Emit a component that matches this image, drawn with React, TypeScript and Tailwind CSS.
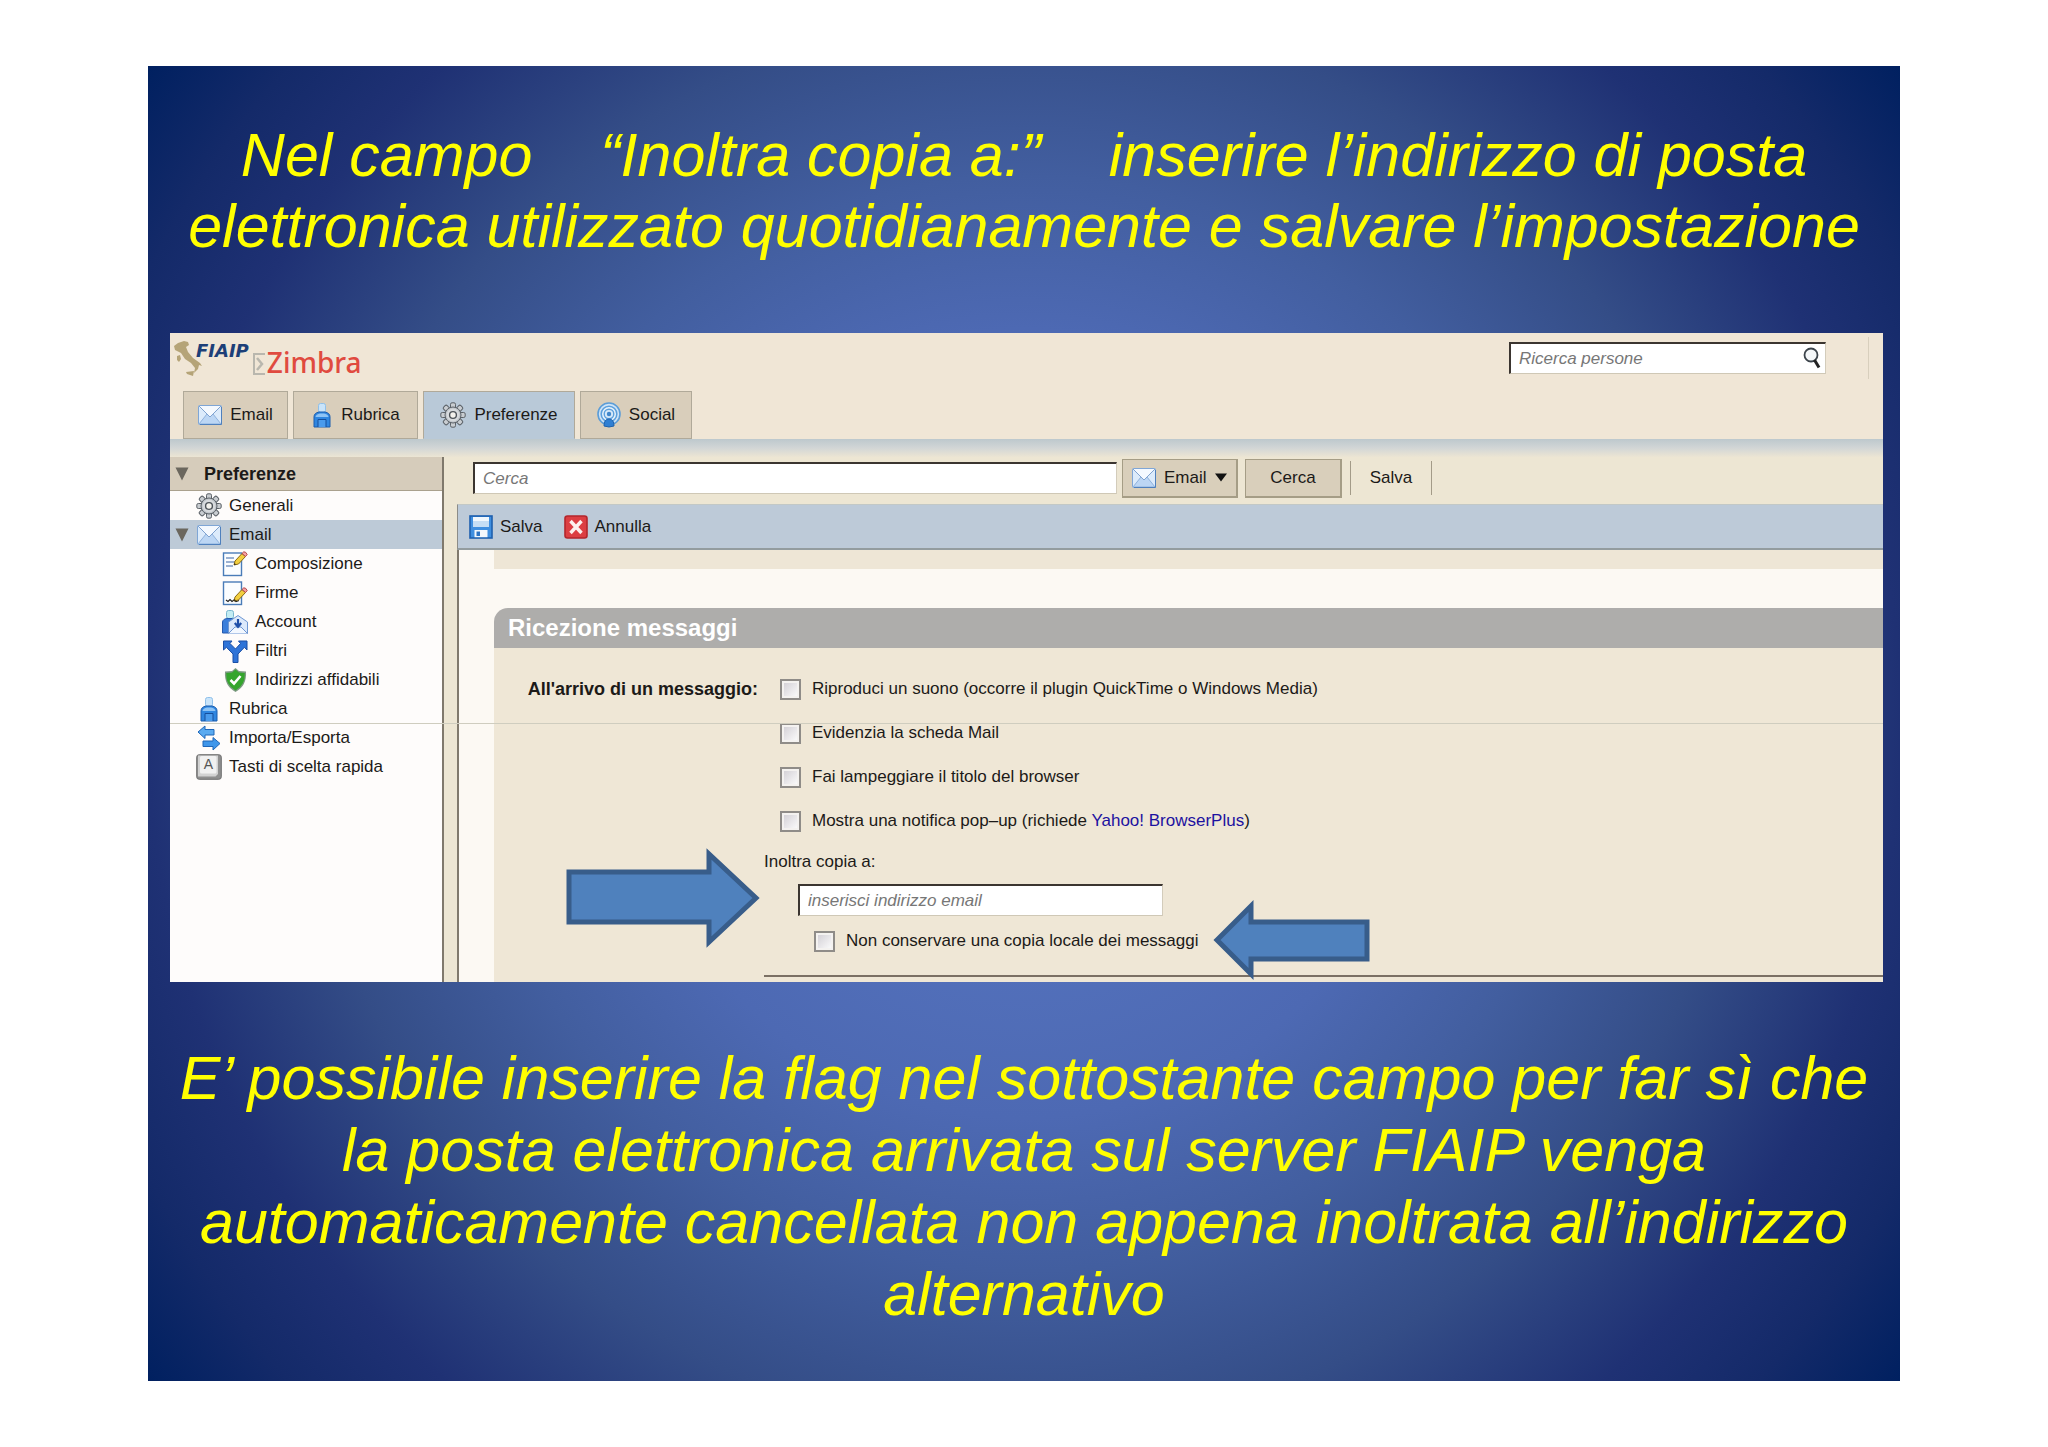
import React from 'react';

interface IconProps {
  className?: string;
}

const EnvelopeIcon: React.FC<IconProps> = ({ className = '' }) => (
  <svg className={className} width="24" height="20" viewBox="0 0 24 20">
    <rect x="0.5" y="0.5" width="23" height="19" rx="1" fill="#dcebfb" stroke="#7fa6d6" />
    <path d="M1 19 L9 9 L12 12 L15 9 L23 19 Z" fill="#bcd6f4" stroke="#8fb2dd" />
    <path d="M1 1 L12 12 L23 1" fill="#f4f9ff" stroke="#7fa2cf" />
    <path d="M23.5 2 V19.5 H2" fill="none" stroke="#4f80bd" />
  </svg>
);

const PersonIcon: React.FC<IconProps> = ({ className = '' }) => (
  <svg className={className} width="22" height="26" viewBox="0 0 22 26">
    <rect x="7.5" y="1.5" width="7" height="9" rx="2" fill="#c9e4fa" stroke="#8fc0ea" />
    <path d="M3 25 V15 Q3 11 8 10 H14 Q19 11 19 15 V25 Z" fill="#2f86e0" stroke="#1a5cae" />
    <path d="M4.5 15 Q5 12 9 11.5 H13 Q17 12 17.5 15 Z" fill="#8fc4f5" />
    <path d="M7 25 V17.5 H15 V25" fill="#4a9bec" stroke="#164f9c" />
  </svg>
);

const GearIcon: React.FC<IconProps> = ({ className = '' }) => (
  <svg className={className} width="26" height="26" viewBox="0 0 26 26">
    <g fill="#c9cdd1" stroke="#5c6268">
      {[0, 45, 90, 135, 180, 225, 270, 315].map((angle) => (
        <rect key={angle} x="10.5" y="0.8" width="5" height="7" rx="1.5" transform={`rotate(${angle} 13 13)`} />
      ))}
    </g>
    <circle cx="13" cy="13" r="8" fill="#bfc4c9" stroke="#5c6268" />
    <circle cx="13" cy="13" r="6.4" fill="#d7dadd" />
    <circle cx="13" cy="13" r="3.4" fill="#f3f1ec" stroke="#4d5359" strokeWidth="1.4" />
  </svg>
);

const SocialIcon: React.FC = () => (
  <svg width="24" height="26" viewBox="0 0 24 26">
    <circle cx="12" cy="12" r="11" fill="#cfe4f7" stroke="#5b9dd8" strokeWidth="1.6" />
    <circle cx="12" cy="12" r="7.8" fill="#e8f3fc" stroke="#5b9fdc" strokeWidth="1.6" />
    <circle cx="12" cy="12" r="4.8" fill="#d5e8f8" stroke="#5b9fdc" strokeWidth="1.4" />
    <circle cx="12" cy="12" r="2.2" fill="#3f86cc" />
    <path d="M7 24 Q7 17 12 17 Q17 17 17 24 Q12 26 7 24 Z" fill="#2f7fd3" stroke="#1f62ab" />
  </svg>
);

const PencilPageIcon: React.FC<{ signature?: boolean }> = ({ signature }) => (
  <svg width="26" height="26" viewBox="0 0 26 26">
    <rect x="1.5" y="2" width="18" height="22.5" fill="#fbfdff" stroke="#4a7cb8" strokeWidth="1.4" />
    {signature ? (
      <path d="M4 20 l2 1.5 l2 -2 l2 2 l2 -1.5 l2 1.5 l3 -1" fill="none" stroke="#222" strokeWidth="1.2" />
    ) : (
      <path d="M4 7 H12 M4 11 H13 M4 15 H11" stroke="#7c98c4" strokeWidth="1.5" />
    )}
    <g transform={signature ? 'translate(0 7)' : undefined}>
      <path d="M12 14 L13 10 L20 2.5 L23.5 5.5 L16.5 13 Z" fill="#f2cf3f" stroke="#8a6a15" />
      <path d="M20 2.5 L21.8 0.8 Q24 0.6 25.2 3.6 L23.5 5.5 Z" fill="#f5a3a3" stroke="#b5474b" />
      <path d="M12 14 L12.6 12 L14 13.4 Z" fill="#222" />
    </g>
  </svg>
);

const AccountIcon: React.FC = () => (
  <svg width="26" height="26" viewBox="0 0 26 26">
    <rect x="4.5" y="1.5" width="7" height="8" rx="2" fill="#c3ecf3" stroke="#78b6cf" />
    <path d="M0.5 24 V13 Q1 9.5 6 9.5 H10 L13 12 V24 Z" fill="#3b7fdb" stroke="#2459ae" />
    <path d="M6.5 13 L16 6.5 L25.5 13 V24.5 H6.5 Z" fill="#dce9fb" stroke="#6f97d2" />
    <path d="M6.5 24.5 L13 18 H19 L25.5 24.5" fill="#f3f8ff" stroke="#6f97d2" />
    <path d="M16 10 V16 M12.8 14 L16 17.8 L19.2 14" fill="none" stroke="#1f4fa8" strokeWidth="2.2" />
  </svg>
);

const FilterIcon: React.FC = () => (
  <svg width="26" height="26" viewBox="0 0 26 26">
    <path
      d="M1.5 3 H10 L8 5.5 L13.5 11 L18.5 5.5 L16.5 3 H25 V12 L22.4 9.3 L16 16 V24.5 H11 V16 L4.4 9.3 L1.5 12 Z"
      fill="#2f74d8"
      stroke="#1b4fa6"
    />
  </svg>
);

const ShieldIcon: React.FC = () => (
  <svg width="26" height="26" viewBox="0 0 26 26">
    <path d="M13.5 1 L17 4 L24 4.5 Q25 19 13.5 25 Q2 19 3 4.5 L10 4 Z" fill="#7f9a84" />
    <path d="M13.5 2.5 L17 5.5 L22.8 6 Q23.5 18 13.5 23.5 Q3.5 18 4.2 6 L10 5.5 Z" fill="#35a52d" />
    <path d="M8.5 13 L12 16.5 L18.5 9" fill="none" stroke="#fff" strokeWidth="2.6" />
  </svg>
);

const ImportExportIcon: React.FC = () => (
  <svg width="26" height="26" viewBox="0 0 26 26">
    <path d="M2 7 L9 1 V4.5 H18 V10 H9 V13.5 Z" fill="#5aaaf0" stroke="#1f66b8" />
    <path d="M24 18.5 L17 12.5 V16 H7 V21.5 H17 V25 Z" fill="#3f96ea" stroke="#1f66b8" />
  </svg>
);

const KeyIcon: React.FC = () => (
  <svg width="26" height="26" viewBox="0 0 26 26">
    <rect x="0.7" y="0.7" width="24.6" height="24.6" rx="2.5" fill="#8f8f8f" stroke="#6f6f6f" />
    <path d="M2 1.5 H22 V20 L19.5 22.5 H2 Z" fill="#d2d2d2" />
    <rect x="4" y="2" width="16.5" height="17.5" rx="1.5" fill="#f1f1f1" />
    <text x="12.3" y="14.5" textAnchor="middle" fontSize="14" fontFamily="Liberation Sans, sans-serif" fill="#555">
      A
    </text>
  </svg>
);

const DiskIcon: React.FC = () => (
  <svg width="24" height="24" viewBox="0 0 24 24">
    <rect x="1" y="1" width="22" height="22" fill="#3f8fe0" stroke="#1f5fae" strokeWidth="1.6" />
    <rect x="4" y="2" width="16" height="10" fill="#f1f8fe" />
    <rect x="4" y="6" width="16" height="6" fill="#c5def5" />
    <rect x="5.5" y="15" width="13" height="7.2" fill="#f4f8fc" />
    <rect x="7.5" y="16.5" width="3.5" height="4.5" fill="#2d74c4" />
  </svg>
);

const CancelIcon: React.FC = () => (
  <svg width="24" height="24" viewBox="0 0 24 24">
    <rect x="1" y="1" width="22" height="22" rx="2.5" fill="#dc3e42" stroke="#b3262c" strokeWidth="1.6" />
    <path d="M6.5 6 L17.5 18 M17.5 6 L6.5 18" stroke="#fdf1ee" strokeWidth="3.4" />
  </svg>
);

const Triangle: React.FC<IconProps> = ({ className = '' }) => (
  <svg className={className} width="14" height="14" viewBox="0 0 14 14">
    <path d="M0.5 0.5 H13.5 L7 13.5 Z" fill="#6b675e" />
  </svg>
);

const Logo: React.FC = () => (
  <div className="flex items-start pt-2 pl-1">
    <svg className="-mr-3" width="34" height="36" viewBox="0 0 34 36">
      <path
        d="M0 5 L4 2 L10 0 L14 1 L15 4 L12 6 L14 11 L19 17 L26 22 L28 25 L25 24 L24 28 L20 32 L21 27 L17 22 L11 18 L7 12 L3 10 L1 9 Z"
        fill="#b5a478"
      />
      <path d="M3 15 L6 14 L7 18 L5 21 L3 19 Z M12 31 L20 30 L19 35 L13 33 Z" fill="#b5a478" />
    </svg>
    <span className="font-['DejaVu_Sans',sans-serif] text-[18px] leading-[20px] font-bold italic text-[#1d3f78]">
      FIAIP
    </span>
    <svg className="ml-1 mt-3" width="14" height="22" viewBox="0 0 14 22">
      <path d="M12 1 H1 V21 H12" fill="none" stroke="#b9b7ae" strokeWidth="2" />
      <path d="M4 5 L9 11 L4 17" fill="none" stroke="#b9b7ae" strokeWidth="2.5" />
    </svg>
    <span className="mt-1 font-['Noto_Sans',sans-serif] text-[28px] leading-[34px] font-medium text-[#e04a3f]">
      Zimbra
    </span>
  </div>
);

const tabs = [
  { label: 'Email', icon: <EnvelopeIcon />, style: 'w-[105px] bg-[#d9cebb]' },
  { label: 'Rubrica', icon: <PersonIcon />, style: 'w-[125px] bg-[#d9cebb]' },
  { label: 'Preferenze', icon: <GearIcon />, style: 'w-[152px] bg-[#b9c9d8] border-b-[#b9c9d8]' },
  { label: 'Social', icon: <SocialIcon />, style: 'w-[112px] bg-[#d9cebb]' },
];

const folders = [
  { label: 'Generali', icon: <GearIcon /> },
  { label: 'Email', icon: <EnvelopeIcon />, selected: true },
  { label: 'Composizione', icon: <PencilPageIcon />, nested: true },
  { label: 'Firme', icon: <PencilPageIcon signature />, nested: true },
  { label: 'Account', icon: <AccountIcon />, nested: true },
  { label: 'Filtri', icon: <FilterIcon />, nested: true },
  { label: 'Indirizzi affidabili', icon: <ShieldIcon />, nested: true },
  { label: 'Rubrica', icon: <PersonIcon /> },
  { label: 'Importa/Esporta', icon: <ImportExportIcon /> },
  { label: 'Tasti di scelta rapida', icon: <KeyIcon /> },
];

const fieldClass =
  'border-t-2 border-l-2 border-r border-b border-t-[#3b3530] border-l-[#3b3530] border-r-[#d3ccbb] border-b-[#cfc8b6] bg-white px-2 italic outline-none placeholder:text-[#777]';

const Header: React.FC = () => (
  <header className="bg-[#f0e6d6]">
    <div className="flex h-[58px] items-start justify-between">
      <Logo />
      <div className="flex items-start pr-[14px]">
        <div className="relative mt-[9px] mr-[42px]">
          <input
            type="search"
            aria-label="Ricerca persone"
            placeholder="Ricerca persone"
            className={`${fieldClass} block h-[32px] w-[317px]`}
          />
          <svg className="absolute top-1 right-1" width="20" height="24" viewBox="0 0 20 24">
            <circle cx="9" cy="9" r="6.5" fill="#f4f7f9" stroke="#3c444b" strokeWidth="1.8" />
            <path d="M12.5 14 L17 21.5" stroke="#222" strokeWidth="3" />
          </svg>
        </div>
        <div className="mt-1 h-[42px] w-px bg-[#d8cfbd]" />
      </div>
    </div>
    <nav className="flex gap-[5px] pl-[13px]">
      {tabs.map((tab) => (
        <button
          key={tab.label}
          type="button"
          className={`flex h-[48px] items-center justify-center gap-2 border border-[#b0a999] ${tab.style}`}
        >
          {tab.icon}
          {tab.label}
        </button>
      ))}
    </nav>
    <div className="h-[18px] bg-linear-to-b from-[#bdc8cd] via-[#d2d6d6] to-[#ece5d3]" />
  </header>
);

const Sidebar: React.FC = () => (
  <aside className="w-[274px] shrink-0 border-r-2 border-[#80796c] bg-[#fefcfb]">
    <h2 className="flex h-[34px] items-center border-b border-[#aaa18e] bg-[#d6ccbb] pl-[5px] text-[18px] font-bold">
      <Triangle className="mr-[15px]" />
      Preferenze
    </h2>
    {folders.map((folder) => (
      <button
        key={folder.label}
        type="button"
        className={`flex h-[29px] w-full items-center ${folder.nested ? 'pl-[52px]' : folder.selected ? 'bg-[#bdcad7] pl-[5px]' : 'pl-[26px]'}`}
      >
        {folder.selected && <Triangle className="mr-[7px]" />}
        <span className="mr-[7px] flex w-[26px] justify-center">{folder.icon}</span>
        {folder.label}
      </button>
    ))}
  </aside>
);

const SearchBar: React.FC = () => (
  <div className="flex h-[47px] items-center pb-[5px] pl-[16px]">
    <input
      type="search"
      aria-label="Cerca"
      placeholder="Cerca"
      className={`${fieldClass} h-[32px] w-[644px]`}
    />
    <label className="ml-[5px] flex h-[39px] w-[116px] items-center border border-r-2 border-b-2 border-[#a59d86] bg-[#d9cfbb] pl-[9px]">
      <EnvelopeIcon />
      <select aria-label="Tipo di ricerca" className="ml-2 w-[44px] appearance-none bg-transparent outline-none">
        <option>Email</option>
      </select>
      <svg className="ml-[6px]" width="14" height="9" viewBox="0 0 14 9">
        <path d="M1 0.5 H13 L7 8.5 Z" fill="#111" />
      </svg>
    </label>
    <button
      type="button"
      className="ml-[7px] h-[39px] w-[97px] border border-r-2 border-b-2 border-[#a59d86] bg-[#d9cfbb]"
    >
      Cerca
    </button>
    <button type="button" className="ml-[8px] h-[34px] w-[82px] border-x border-[#a39b88]">
      Salva
    </button>
  </div>
);

interface CheckOptionProps {
  id: string;
  className?: string;
  children: React.ReactNode;
}

const CheckOption: React.FC<CheckOptionProps> = ({ id, className = 'h-[44px]', children }) => (
  <div className={`flex items-center gap-[11px] ${className}`}>
    <input
      id={id}
      type="checkbox"
      className="size-[21px] shrink-0 appearance-none border-2 border-[#8f8c88] bg-linear-to-br from-[#cfccd2] to-[#ffffff] ring-2 ring-[#f4f2f0] ring-inset"
    />
    <label htmlFor={id}>{children}</label>
  </div>
);

const ReceivingForm: React.FC = () => (
  <form className="relative flex bg-[#efe7d6] pt-[19px] pb-[5px]">
    <div className="h-[44px] w-[270px] shrink-0 pr-[6px] text-right text-[18px] leading-[44px] font-bold">
      All'arrivo di un messaggio:
    </div>
    <div className="flex-1">
      <div className="pl-[16px]">
        <CheckOption id="sound">Riproduci un suono (occorre il plugin QuickTime o Windows Media)</CheckOption>
        <CheckOption id="highlight">Evidenzia la scheda Mail</CheckOption>
        <CheckOption id="blink">Fai lampeggiare il titolo del browser</CheckOption>
        <CheckOption id="popup">
          Mostra una notifica pop–up (richiede <a href="#" className="text-[#1d12a0]">Yahoo! BrowserPlus</a>)
        </CheckOption>
      </div>
      <label htmlFor="forward" className="block h-[41px] leading-[38px]">Inoltra copia a:</label>
      <input
        id="forward"
        type="email"
        placeholder="inserisci indirizzo email"
        className={`${fieldClass} ml-[34px] block h-[32px] w-[365px]`}
      />
      <CheckOption id="nocopy" className="h-[50px] pl-[50px]">Non conservare una copia locale dei messaggi</CheckOption>
      <div className="mt-[9px] h-[2px] bg-[#7b7064]" />
    </div>

    {/* callout arrows */}
    <svg className="absolute top-[197px] left-[72px]" width="196" height="106" viewBox="0 0 196 106">
      <path d="M3 27 H143 V9 L190 53 L143 97 V77 H3 Z" fill="#4f81bd" stroke="#385d8a" strokeWidth="5" />
    </svg>
    <svg className="absolute top-[251px] left-[719px]" width="160" height="82" viewBox="0 0 160 82">
      <path d="M4 41 L38 7 V23 H154 V60 H38 V75 Z" fill="#4f81bd" stroke="#385d8a" strokeWidth="5" />
    </svg>
  </form>
);

const ZimbraWindow: React.FC = () => (
  <section className="relative overflow-hidden text-[17px] leading-[20px] text-[#1c1a18]">
    <Header />
    <div className="flex bg-[#ede6d3]">
      <Sidebar />
      <main className="ml-[13px] min-w-0 flex-1">
        <SearchBar />
        <div className="flex h-[46px] items-center border-t border-b-2 border-l border-t-[#c2c8c6] border-b-[#939c9f] border-l-[#8c8c88] bg-[#bdcad8] pl-[11px]">
          <button type="button" className="flex items-center gap-[7px]">
            <DiskIcon />
            Salva
          </button>
          <button type="button" className="ml-[21px] flex items-center gap-[7px]">
            <CancelIcon />
            Annulla
          </button>
        </div>
        <div className="border-l-2 border-[#80796c] bg-[#fcf9f3] pl-[35px]">
          <div className="h-[19px] bg-[#eee6d6]" />
          <h3 className="mt-[39px] h-[40px] rounded-tl-[14px] bg-[#aeadab] pl-[14px] text-[24px] leading-[40px] font-bold text-white">
            Ricezione messaggi
          </h3>
          <ReceivingForm />
        </div>
      </main>
    </div>
    <div className="absolute inset-x-0 top-[390px] h-px bg-[#cfcdbf]" />
  </section>
);

export default function App() {
  return (
    <div className="bg-white px-[148px] py-[66px] font-['Liberation_Sans',Arial,sans-serif]">
      <article className="bg-[radial-gradient(circle_farthest-corner_at_center,#5a7ac6_0%,#4d69b3_36%,#425e9f_50%,#344d87_65%,#1f3174_80%,#142a69_90%,#002060_100%)] pt-[54px] pb-[51px]">
        <h1 className="text-center text-[61px] leading-[71px] whitespace-pre text-[#ffff00] italic">
          <span className="block">Nel campo    “Inoltra copia a:”    inserire l’indirizzo di posta</span>
          <span className="block">elettronica utilizzato quotidianamente e salvare l’impostazione</span>
        </h1>
        <div className="mt-[71px] mr-[17px] mb-[60px] ml-[22px]">
          <ZimbraWindow />
        </div>
        <p className="text-center text-[61px] leading-[72px] whitespace-pre text-[#ffff00] italic">
          <span className="block">E’ possibile inserire la flag nel sottostante campo per far sì che</span>
          <span className="block">la posta elettronica arrivata sul server FIAIP venga</span>
          <span className="block">automaticamente cancellata non appena inoltrata all’indirizzo</span>
          <span className="block">alternativo</span>
        </p>
      </article>
    </div>
  );
}
